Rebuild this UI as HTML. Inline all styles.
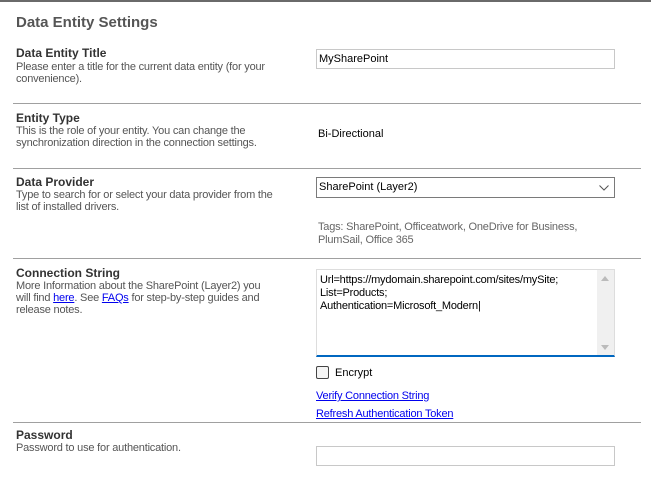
<!DOCTYPE html>
<html><head><style>
body{margin:0;width:651px;height:478px;background:#fff;font-family:"Liberation Sans",sans-serif;position:relative;overflow:hidden}
.top{position:absolute;left:0;top:0;width:651px;height:2px;background:#6a6a6a}
.a{position:absolute;white-space:nowrap}
h1{position:absolute;left:16px;top:14px;margin:0;font-size:15px;font-weight:bold;color:#555}
.l{font-size:12px;font-weight:bold;color:#333}
.d{font-size:11px;color:#555;line-height:12px;letter-spacing:-0.2px}
.hr{position:absolute;left:13px;width:628px;height:1px;background:#a0a0a0}
.in{position:absolute;left:316px;width:299px;box-sizing:border-box;border:1px solid #c8c8c8;height:20px;font-size:11px;color:#000;line-height:18px;padding-left:2px}
a{color:#00e;text-decoration:underline}
</style></head><body>
<div class="top"></div>
<h1>Data Entity Settings</h1>
<div class="a l" style="left:16px;top:46px">Data Entity Title</div>
<div class="a d" style="left:16px;top:61px">Please enter a title for the current data entity (for your<br>convenience).</div>
<div class="in" style="top:49px">MySharePoint</div>
<div class="hr" style="top:103px"></div>
<div class="a l" style="left:16px;top:111px">Entity Type</div>
<div class="a d" style="left:16px;top:125px">This is the role of your entity. You can change the<br>synchronization direction in the connection settings.</div>
<div class="a" style="left:318px;top:128px;font-size:11px">Bi-Directional</div>
<div class="hr" style="top:168px"></div>
<div class="a l" style="left:16px;top:175px">Data Provider</div>
<div class="a d" style="left:16px;top:189px">Type to search for or select your data provider from the<br>list of installed drivers.</div>
<div class="in" style="top:177px;border-color:#7a7a7a;height:21px;line-height:19px">SharePoint (Layer2)<svg style="position:absolute;right:5px;top:7px" width="10" height="6"><path d="M0.5 0.5L5 5L9.5 0.5" fill="none" stroke="#555"/></svg></div>
<div class="a d" style="left:318px;top:221px;color:#666;line-height:13px">Tags: SharePoint, Officeatwork, OneDrive for Business,<br>PlumSail, Office 365</div>
<div class="hr" style="top:258px"></div>
<div class="a l" style="left:16px;top:266px">Connection String</div>
<div class="a d" style="left:16px;top:280px">More Information about the SharePoint (Layer2) you<br>will find <a>here</a>. See <a>FAQs</a> for step-by-step guides and<br>release notes.</div>
<div class="a" style="left:316px;top:269px;width:299px;height:88px;border:1px solid #ddd;border-bottom:2px solid #0067c0;font-size:11px;line-height:13px;padding:4px 0 0 3px;box-sizing:border-box;letter-spacing:-0.2px">Url=https://mydomain.sharepoint.com/sites/mySite;<br>List=Products;<br>Authentication=Microsoft_Modern|
<div style="position:absolute;right:0;top:0;width:17px;height:85px;background:#f0f0f0"><div style="position:absolute;left:4px;top:6px;border:4px solid transparent;border-bottom:5px solid #bbb;border-top:0"></div><div style="position:absolute;left:4px;top:75px;border:4px solid transparent;border-top:5px solid #bbb;border-bottom:0"></div></div></div>
<div class="a" style="left:316px;top:366px;width:11px;height:11px;border:1px solid #444;border-radius:2px;background:#f4f4f4"></div>
<div class="a" style="left:335px;top:367px;font-size:11px">Encrypt</div>
<div class="a" style="left:316px;top:390px;font-size:11px;letter-spacing:-0.2px"><a>Verify Connection String</a></div>
<div class="a" style="left:316px;top:408px;font-size:11px;letter-spacing:-0.2px"><a>Refresh Authentication Token</a></div>
<div class="hr" style="top:422px"></div>
<div class="a l" style="left:16px;top:428px">Password</div>
<div class="a d" style="left:16px;top:442px">Password to use for authentication.</div>
<div class="in" style="top:446px"></div>
</body></html>
